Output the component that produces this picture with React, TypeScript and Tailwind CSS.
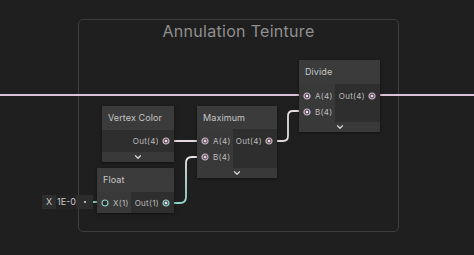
import React from 'react';
import { ChevronDown } from 'lucide-react';

const font = { fontFamily: 'Inter, "Noto Sans", sans-serif' };

function Port({ teal = false, hollow = false }: { teal?: boolean; hollow?: boolean }) {
  const ring = teal ? '#8fd3c9' : '#cdb6c7';
  return (
    <svg width="8" height="8" viewBox="0 0 8 8" className="shrink-0">
      <circle cx="4" cy="4" r="3" fill={hollow ? '#2a2a2a' : '#5d4d59'} stroke={ring} strokeWidth="1.2" />
      {!hollow && <circle cx="4" cy="4" r="1.3" fill={teal ? '#c8f0ea' : '#eadbe5'} />}
    </svg>
  );
}

function Footer() {
  return (
    <div className="h-[10px] bg-[#393939] flex items-center justify-center">
      <ChevronDown className="w-[10px] h-[10px] text-[#d6d6d6]" strokeWidth={3} />
    </div>
  );
}

type NodeProps = {
  title: string;
  left: string;
  top: string;
  width: string;
  inputs?: { label: string; teal?: boolean; hollow?: boolean }[];
  inputCol?: string;
  output: { label: string; teal?: boolean };
  bodyH: string;
  bodyPad: string;
  headerH: string;
  footer?: boolean;
};

function GraphNode({ title, left, top, width, inputs, inputCol, output, bodyH, bodyPad, headerH, footer = true }: NodeProps) {
  return (
    <div className={`absolute ${left} ${top} ${width} flex flex-col shadow-[0_1px_3px_rgba(0,0,0,0.5)]`}>
      <div className={`${headerH} bg-[#3b3b3b] px-[6px] flex items-center text-[9px] text-[#c6c6c6] tracking-[0.1px]`}>{title}</div>
      <div className={`flex ${bodyH}`}>
        {inputs && (
          <div className={`${inputCol} bg-[#393939] flex flex-col ${bodyPad}`}>
            {inputs.map((p) => (
              <div key={p.label} className="h-[16px] flex items-center gap-[4px] pl-[4px] text-[8px] text-[#bdbdbd] tracking-[0.3px]">
                <Port teal={p.teal} hollow={p.hollow} />
                <span>{p.label}</span>
              </div>
            ))}
          </div>
        )}
        <div className={`flex-1 bg-[#2e2e2e] flex flex-col ${bodyPad}`}>
          <div className="h-[16px] flex items-center justify-end gap-[3px] pr-[4px] text-[8px] text-[#bdbdbd] tracking-[0.3px]">
            <span>{output.label}</span>
            <Port teal={output.teal} />
          </div>
        </div>
      </div>
      {footer && <Footer />}
    </div>
  );
}

export default function App() {
  return (
    <div className="relative w-[474px] h-[255px] bg-[#1f1f1f] overflow-hidden" style={font}>
      {/* Group */}
      <div className="absolute left-[78px] top-[19px] w-[321px] h-[213px] border border-[#3d3d3d] rounded-[5px] flex justify-center">
        <span className="mt-[-1px] text-[16px] text-[#8f8f8f] tracking-[0.3px]">Annulation Teinture</span>
      </div>

      {/* Edges */}
      <svg className="absolute inset-0" width="474" height="255" viewBox="0 0 474 255" fill="none">
        <defs>
          <linearGradient id="fl" x1="0" y1="203" x2="0" y2="157" gradientUnits="userSpaceOnUse">
            <stop offset="0" stopColor="#8fd3c9" />
            <stop offset="1" stopColor="#eee6ec" />
          </linearGradient>
        </defs>
        <path d="M0 95 H305" stroke="#dcc0d6" strokeWidth="1.8" />
        <path d="M374 95 H474" stroke="#dcc0d6" strokeWidth="1.8" />
        <path d="M169 141 H203" stroke="#e6dae2" strokeWidth="1.8" />
        <path d="M271 141 H283 Q288 141 288 136 V116 Q288 111 293 111 H305" stroke="#e6dae2" strokeWidth="1.8" />
        <path d="M169 203 H180 Q186 203 186 197 V163 Q186 157 192 157 H203" stroke="url(#fl)" strokeWidth="1.8" />
        <path d="M88 202 H102" stroke="#8fd3c9" strokeWidth="1.8" />
      </svg>

      {/* Inline value field */}
      <div className="absolute left-[42px] top-[195px] w-[51px] h-[14px] bg-[#2d2d2d] flex items-center text-[9px] text-[#c8c8c8]">
        <span className="w-[14px] text-center">X</span>
        <span className="w-[20px] h-[14px] bg-[#222222] overflow-hidden whitespace-nowrap flex items-center pl-[1px]">1E-05</span>
        <span className="ml-[8px] w-[2px] h-[2px] bg-[#e0e0e0] rounded-full" />
      </div>

      <GraphNode
        title="Divide"
        left="left-[299px]"
        top="top-[60px]"
        width="w-[81px]"
        headerH="h-[24px]"
        bodyH="h-[38px]"
        bodyPad="pt-[4px]"
        inputCol="w-[36px]"
        inputs={[{ label: 'A(4)' }, { label: 'B(4)' }]}
        output={{ label: 'Out(4)' }}
      />
      <GraphNode
        title="Vertex Color"
        left="left-[102px]"
        top="top-[106px]"
        width="w-[72px]"
        headerH="h-[24px]"
        bodyH="h-[22px]"
        bodyPad="pt-[3px]"
        output={{ label: 'Out(4)' }}
      />
      <GraphNode
        title="Maximum"
        left="left-[197px]"
        top="top-[106px]"
        width="w-[80px]"
        headerH="h-[23px]"
        bodyH="h-[39px]"
        bodyPad="pt-[4px]"
        inputCol="w-[36px]"
        inputs={[{ label: 'A(4)' }, { label: 'B(4)' }]}
        output={{ label: 'Out(4)' }}
      />
      <GraphNode
        title="Float"
        left="left-[97px]"
        top="top-[168px]"
        width="w-[77px]"
        headerH="h-[24px]"
        bodyH="h-[21px]"
        bodyPad="pt-[3px]"
        inputCol="w-[34px]"
        inputs={[{ label: 'X(1)', teal: true, hollow: true }]}
        output={{ label: 'Out(1)', teal: true }}
        footer={false}
      />
    </div>
  );
}
